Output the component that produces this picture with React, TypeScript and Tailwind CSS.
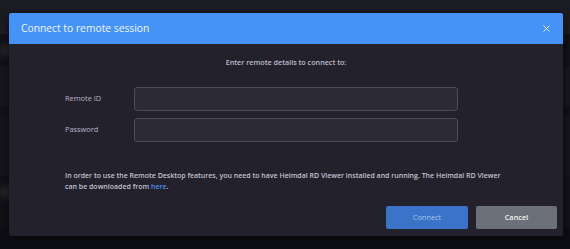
import { X } from 'lucide-react';

// Connect to remote session dialog over a dimmed dashboard
export default function App() {
  return (
    <div
      className="relative h-[249px] w-[570px] overflow-hidden bg-[#111218]"
      style={{ fontFamily: '"Open Sans", "Liberation Sans", sans-serif' }}
    >
      {/* Dimmed page behind the dialog */}
      <div className="flex h-full flex-col">
        <div className="h-[34px] bg-[#1c1d23]" />
        <div className="flex flex-1 flex-col gap-[10px] px-0 pt-[10px]">
          <div className="h-[12px] w-[40px] bg-[#23252c] blur-[3px]" />
          <div className="h-[40px] bg-[#16171d]" />
          <div className="h-[60px] bg-[#15161c]" />
          <div className="h-[12px] w-[30px] bg-[#25262c] blur-[3px]" />
        </div>
        <div className="h-[20px] bg-[#0d0e14]" />
      </div>

      {/* Dialog */}
      <div className="absolute left-[9px] top-[13px] flex h-[223px] w-[554px] flex-col overflow-hidden rounded-[2px] bg-[#22212c] shadow-[0_2px_8px_rgba(0,0,0,0.6)]">
        <div className="flex h-[31px] shrink-0 items-center justify-between bg-[#4693f8] pl-[12px] pr-[11px]">
          <span className="text-[10.3px] leading-none text-[#eef3ff]">Connect to remote session</span>
          <X className="h-[11px] w-[11px] text-[#e8f0ff]" strokeWidth={2} />
        </div>

        <div className="flex flex-1 flex-col pt-[13px]">
          <p className="text-center text-[7.2px] font-semibold leading-[10px] text-[#bdbccb]">
            Enter remote details to connect to:
          </p>

          <div className="mt-[20px] flex flex-col gap-[7px]">
            <div className="flex items-center">
              <span className="w-[125px] pl-[56px] text-[7.4px] leading-none text-[#b9b7c9]">Remote ID</span>
              <div className="h-[24px] w-[324px] rounded-[3px] border border-[#4b4a57] bg-[#2b2a35]" />
            </div>
            <div className="flex items-center">
              <span className="w-[125px] pl-[56px] text-[7.4px] leading-none text-[#b9b7c9]">Password</span>
              <div className="h-[24px] w-[324px] rounded-[3px] border border-[#4b4a57] bg-[#2b2a35]" />
            </div>
          </div>

          <p className="mt-[28px] pl-[56px] pr-[55px] text-[7px] font-semibold leading-[11px] text-[#c3c1cf]">
            In order to use the Remote Desktop features, you need to have Heimdal RD Viewer installed and running. The Heimdal RD Viewer can be downloaded from <span className="text-[#4c90f2]">here</span>.
          </p>

          <div className="mt-auto flex justify-end gap-[8px] pb-[7px] pr-[6px]">
            <button className="h-[23px] w-[82px] rounded-[2px] bg-[#3a73c8] text-[7.4px] text-[#a8c2ea]">
              Connect
            </button>
            <button className="h-[23px] w-[81px] rounded-[2px] bg-[#6c7078] text-[7.4px] font-semibold text-[#eef0f4]">
              Cancel
            </button>
          </div>
        </div>
      </div>
    </div>
  );
}
